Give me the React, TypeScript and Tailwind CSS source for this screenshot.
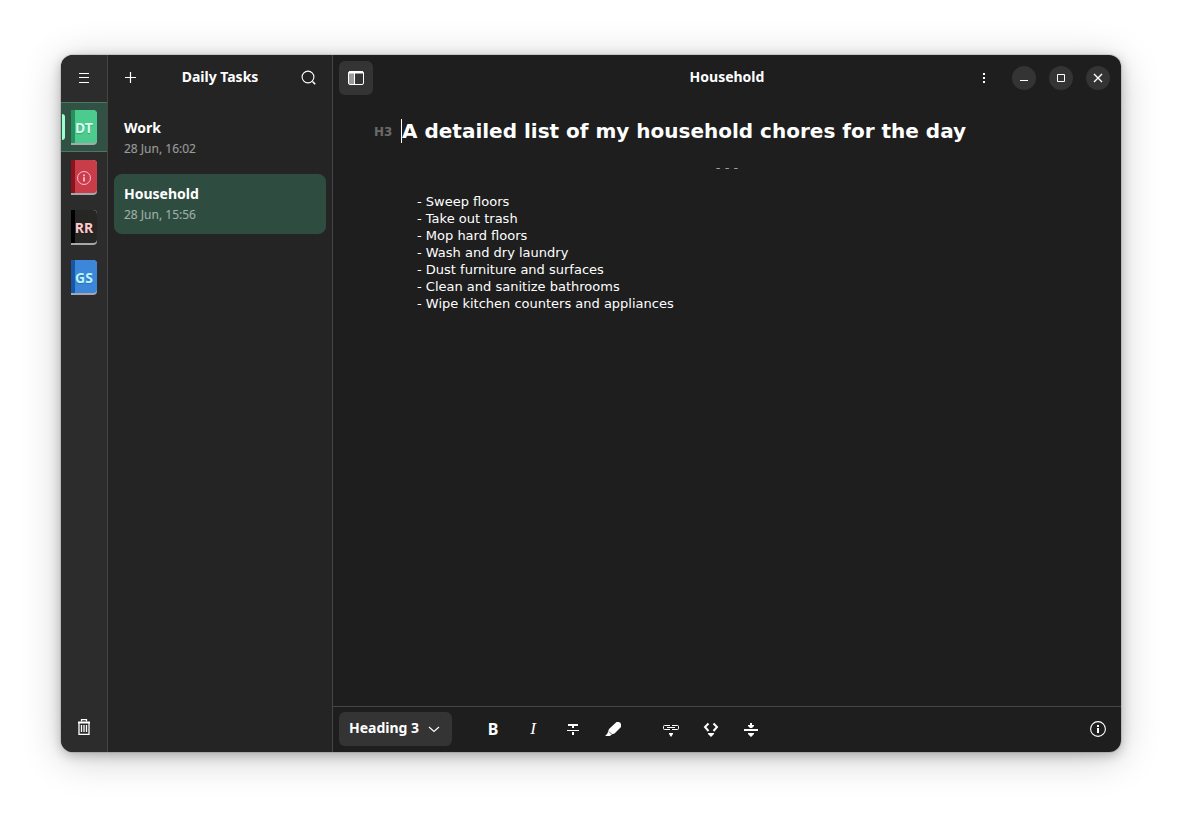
import React, { useState } from "react";

type Notebook = {
  id: string;
  label: string;
  title: string;
  cover: string;
  spine: string;
};

const notebooks: Notebook[] = [
  { id: "dt", label: "DT", title: "Daily Tasks", cover: "bg-[#4dca8d] text-[#d2fbf0]", spine: "border-[#26925b]" },
  { id: "info", label: "", title: "Information", cover: "bg-[#c93d48] text-[#ffc0e0]", spine: "border-[#8c131e]" },
  { id: "rr", label: "RR", title: "Notebook RR", cover: "bg-[#262624] text-[#ffc9cb]", spine: "border-black" },
  { id: "gs", label: "GS", title: "Notebook GS", cover: "bg-[#3d87db] text-[#b9f6ff]", spine: "border-[#1757a5]" },
];

const notes = [
  { name: "Work", date: "28 Jun, 16:02" },
  { name: "Household", date: "28 Jun, 15:56" },
];

const chores = [
  "Sweep floors",
  "Take out trash",
  "Mop hard floors",
  "Wash and dry laundry",
  "Dust furniture and surfaces",
  "Clean and sanitize bathrooms",
  "Wipe kitchen counters and appliances",
];

function Icon({ children, className = "size-4" }: { children: React.ReactNode; className?: string }) {
  return (
    <svg viewBox="0 0 16 16" className={className} fill="none" stroke="currentColor" aria-hidden="true">
      {children}
    </svg>
  );
}

function IconButton({ label, className = "", children }: { label: string; className?: string; children: React.ReactNode }) {
  return (
    <button
      type="button"
      aria-label={label}
      className={`flex size-[34px] shrink-0 items-center justify-center rounded-md hover:bg-white/10 ${className}`}
    >
      {children}
    </button>
  );
}

function WindowButton({ label, children }: { label: string; children: React.ReactNode }) {
  return (
    <button type="button" aria-label={label} className="flex size-6 items-center justify-center rounded-full bg-[#343434]">
      {children}
    </button>
  );
}

function InfoIcon({ className }: { className?: string }) {
  return (
    <Icon className={className}>
      <circle cx="8" cy="8" r="7.4" strokeWidth="1.1" />
      <path d="M7 4h2v2H7zM7 7h2v5H7z" fill="currentColor" stroke="none" />
    </Icon>
  );
}

function NotebookRail() {
  return (
    <nav aria-label="Notebooks" className="flex w-[47px] shrink-0 flex-col border-r border-[#464646] bg-[#2c2c2c]">
      <div className="flex h-[47px] items-center justify-center pb-px">
        <IconButton label="Main menu">
          <Icon>
            <path d="M3 3.5h10M3 7.5h10M3 12.5h10" />
          </Icon>
        </IconButton>
      </div>

      {notebooks.map((book, i) => (
        <button
          key={book.id}
          type="button"
          aria-label={book.title}
          className={`relative flex h-[50px] justify-center border-y pt-[7px] ${
            i === 0 ? "border-[#4d7765] bg-[#305144]" : "border-transparent"
          }`}
        >
          {i === 0 && <span className="absolute top-[11px] left-px h-[26px] w-[3px] rounded-r-sm bg-[#9dffce]" />}
          <span className="block h-[35px] w-[26px] overflow-hidden rounded-r-[4px] bg-[#a5a8ac]">
            <span
              className={`flex h-[33px] items-center justify-center rounded-r-[4px] border-l-4 pt-0.5 ${book.cover} ${book.spine}`}
            >
              <span className="-ml-1 flex w-[26px] shrink-0 justify-center text-[14px] leading-4 font-bold text-shadow-xs">
                {book.label || <InfoIcon className="size-[14px]" />}
              </span>
            </span>
          </span>
        </button>
      ))}

      <div className="mt-auto flex justify-center pb-2">
        <IconButton label="Trash">
          <Icon>
            <path d="M2 3.5h12" strokeWidth="1.8" />
            <path d="M5.5 2.5v-1.9h5v1.9" strokeWidth="1.2" />
            <path d="M3 4v11.4h10V4" strokeWidth="1.3" />
            <path d="M5.5 6v7M8 6v7M10.5 6v7" strokeWidth="1.3" />
          </Icon>
        </IconButton>
      </div>
    </nav>
  );
}

function NoteList() {
  const [selected, setSelected] = useState("Household");

  return (
    <aside className="flex w-[225px] shrink-0 flex-col border-r border-[#464646] bg-[#242424]">
      <header className="flex h-[47px] items-center justify-between px-1.5 pb-px">
        <IconButton label="New note">
          <Icon>
            <path d="M7.5 2v11M2 7.5h11" strokeWidth="1.2" />
          </Icon>
        </IconButton>
        <h1 className="pb-0.5 text-[14px] leading-5 font-bold">Daily Tasks</h1>
        <IconButton label="Search">
          <Icon>
            <circle cx="7" cy="7" r="5.9" strokeWidth="1.1" />
            <path d="M11.5 11.5l2.700 2.700" strokeWidth="1.6" />
          </Icon>
        </IconButton>
      </header>

      <ul className="flex flex-col gap-1.5 p-1.5">
        {notes.map((note) => (
          <li key={note.name}>
            <button
              type="button"
              onClick={() => setSelected(note.name)}
              className={`flex h-[60px] w-full flex-col gap-px rounded-lg px-2.5 pt-2.5 text-left ${
                selected === note.name ? "bg-[#2e4d40]" : ""
              }`}
            >
              <span className="text-[14px] leading-5 font-bold">{note.name}</span>
              <span className="text-[12px] leading-5 text-white/55">{note.date}</span>
            </button>
          </li>
        ))}
      </ul>
    </aside>
  );
}

function EditorHeader() {
  return (
    <header className="grid h-[47px] shrink-0 grid-cols-[1fr_auto_1fr] items-center px-1.5 pb-px">
      <IconButton label="Toggle sidebar" className="bg-[#343434]">
        <Icon>
          <path d="M1 3h5v11H1z" fill="#9a9a9a" stroke="none" />
          <rect x="0.5" y="1.5" width="15" height="13" rx="1.5" />
          <path d="M1 2.5h14" strokeWidth="2" />
          <path d="M6.5 3v11" />
        </Icon>
      </IconButton>
      <h2 className="pb-0.5 text-[14px] leading-5 font-bold">Household</h2>
      <div className="flex items-center justify-end pr-[5px]">
        <IconButton label="Note menu" className="mr-[11px]">
          <Icon>
            <path d="M7 3h2v2H7zM7 7h2v2H7zM7 11h2v2H7z" fill="currentColor" stroke="none" />
          </Icon>
        </IconButton>
        <div className="flex gap-[13px]">
          <WindowButton label="Minimize">
            <Icon>
              <path d="M4 10.5h8" />
            </Icon>
          </WindowButton>
          <WindowButton label="Maximize">
            <Icon>
              <path d="M4.5 4.5h7v7h-7z" />
            </Icon>
          </WindowButton>
          <WindowButton label="Close">
            <Icon>
              <path d="M4 4l8 8M12 4l-8 8" strokeWidth="1.4" />
            </Icon>
          </WindowButton>
        </div>
      </div>
    </header>
  );
}

function EditorBody() {
  return (
    <article className="flex-1 overflow-auto px-[41px] pt-[17px] font-['DejaVu_Sans',sans-serif]">
      <div className="flex h-6 items-center">
        <span className="w-[27px] pt-0.5 text-[12px] font-bold text-[#6a6a6a]">H3</span>
        <h3 className="border-l border-white text-[20px] leading-6 font-bold whitespace-nowrap">
          A detailed list of my household chores for the day
        </h3>
      </div>
      <p className="mt-[15px] text-center text-[13px] leading-5 text-[#a0a0a0]">- - -</p>
      <ul className="mt-[15px] pl-[43px] text-[13px] leading-[17px]">
        {chores.map((chore) => (
          <li key={chore}>- {chore}</li>
        ))}
      </ul>
    </article>
  );
}

function FormatBar() {
  return (
    <footer className="flex h-[46px] shrink-0 items-center border-t border-[#464646] px-1.5 pb-px">
      <button
        type="button"
        aria-haspopup="listbox"
        className="flex h-[34px] w-[113px] items-center justify-between rounded-md bg-[#343434] px-2.5 text-[14px] leading-5 font-bold"
      >
        <span className="pb-0.5">Heading 3</span>
        <Icon>
          <path d="M3 6l5 4.5L13 6" strokeWidth="1.1" />
        </Icon>
      </button>

      <div className="ml-6 flex gap-1.5">
        <IconButton label="Bold" className="text-[16px] font-bold">
          B
        </IconButton>
        <IconButton label="Italic" className="font-['Liberation_Serif',serif] text-[17px] italic">
          I
        </IconButton>
        <IconButton label="Strikethrough">
          <Icon>
            <path d="M3 4h10M8 4v3M8 11v3" strokeWidth="2" />
            <path d="M2 9.5h12" />
          </Icon>
        </IconButton>
        <IconButton label="Highlight">
          <Icon>
            <path
              d="M11.500 1h2q2.500 .3 2.500 2.500V6L9.500 12.500l-3 1L5 15H.2l2.300-2.800L4 8z"
              fill="currentColor"
              stroke="none"
            />
            <path d="M4 10.500l2.500 2.500" stroke="#1e1e1e" strokeWidth="0.7" />
          </Icon>
        </IconButton>
      </div>

      <div className="ml-6 flex gap-1.5">
        <IconButton label="Insert link">
          <Icon>
            <path
              d="M7 4.500H1.500a1 1 0 0 0-1 1v2a1 1 0 0 0 1 1H7M9 4.500h5.500a1 1 0 0 1 1 1v2a1 1 0 0 1-1 1H9M4 6.500h8"
            />
            <path d="M6 12h4v1l-2 3-2-3z" fill="currentColor" stroke="none" />
          </Icon>
        </IconButton>
        <IconButton label="Insert code">
          <Icon>
            <path d="M5.500 2.500L2 6l3.500 4M10.500 2.500L14 6l-3.500 4" strokeWidth="2" />
            <path d="M5 12h6v1l-3 3-3-3z" fill="currentColor" stroke="none" />
          </Icon>
        </IconButton>
        <IconButton label="Insert horizontal rule">
          <Icon>
            <path
              d="M7 2h2v2h2v1L9 7H7L5 5V4h2zM1 8h14v2H1zM5 12h6v1l-3 3-3-3z"
              fill="currentColor"
              stroke="none"
            />
          </Icon>
        </IconButton>
      </div>

      <IconButton label="Note information" className="ml-auto">
        <InfoIcon className="size-4" />
      </IconButton>
    </footer>
  );
}

export default function App() {
  return (
    <div className="flex h-screen bg-white px-[61px] pt-[55px] pb-[67px] font-['Noto_Sans',sans-serif] text-white">
      <div className="flex min-w-0 flex-1 overflow-hidden rounded-xl bg-[#1e1e1e] shadow-[0_0_0_1px_rgba(0,0,0,0.1),0_3px_12px_rgba(0,0,0,0.25),0_6px_40px_rgba(0,0,0,0.2)]">
        <NotebookRail />
        <NoteList />
        <main className="flex min-w-0 flex-1 flex-col">
          <EditorHeader />
          <EditorBody />
          <FormatBar />
        </main>
      </div>
    </div>
  );
}
